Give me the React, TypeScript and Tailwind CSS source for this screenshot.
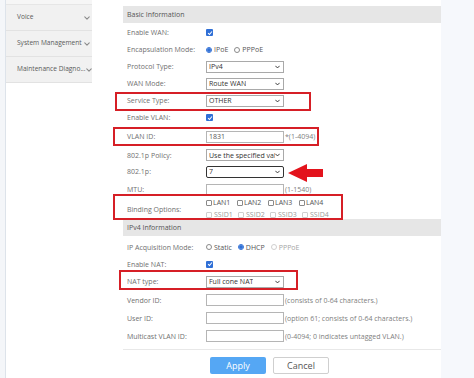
import React from "react";

const Chevron = ({ className = "" }: { className?: string }) => (
  <svg viewBox="0 0 8 5" className={className} fill="none">
    <path d="M1 1 L4 4 L7 1" stroke="currentColor" strokeWidth="1.4" strokeLinecap="round" strokeLinejoin="round" />
  </svg>
);

const Check = () => (
  <span className="inline-flex w-[7px] h-[7px] bg-[#2f6fd6] rounded-[1px] items-center justify-center">
    <svg viewBox="0 0 8 8" className="w-[6px] h-[6px]" fill="none">
      <path d="M1.5 4.2 L3.3 6 L6.6 2" stroke="white" strokeWidth="1.4" />
    </svg>
  </span>
);

const Box = ({ disabled = false }: { disabled?: boolean }) => (
  <span
    className={`inline-block w-[6px] h-[6px] border ${disabled ? "border-[#cfcfcf]" : "border-[#8a8a8a]"} bg-white rounded-[1px]`}
  />
);

const Radio = ({ on = false, disabled = false }: { on?: boolean; disabled?: boolean }) => (
  <span
    className={`inline-flex w-[6px] h-[6px] rounded-full border items-center justify-center ${
      on ? "border-[#2f6fd6]" : disabled ? "border-[#d0d0d0]" : "border-[#8a8a8a]"
    }`}
  >
    {on && <span className="w-[4px] h-[4px] rounded-full bg-[#2f6fd6]" />}
  </span>
);

const Select = ({ value, dark = false }: { value: string; dark?: boolean }) => (
  <div
    className={`w-[78px] h-[12px] flex items-center justify-between pl-[2px] pr-[3px] bg-white border ${
      dark ? "border-[#333] rounded-[2px]" : "border-[#a9a9a9]"
    } text-[#333] overflow-hidden whitespace-nowrap`}
  >
    <span className="overflow-hidden">{value}</span>
    <Chevron className="w-[5px] h-[4px] text-[#222] shrink-0" />
  </div>
);

const Input = ({ value = "" }: { value?: string }) => (
  <div className="w-[78px] h-[12px] flex items-center pl-[2px] bg-white border border-[#b5b5b5] text-[#555]">
    {value}
  </div>
);

const Row = ({ label, h, children }: { label: string; h: string; children?: React.ReactNode }) => (
  <div className={`flex items-center ${h}`}>
    <div className="w-[83px] pl-[4px] text-[#707070] whitespace-nowrap">{label}</div>
    <div className="flex items-center">{children}</div>
  </div>
);

const Hint = ({ children }: { children: React.ReactNode }) => (
  <span className="ml-[1px] text-[#808080] whitespace-nowrap">{children}</span>
);

const SideItem = ({ label }: { label: string }) => (
  <div className="h-[26px] flex items-center justify-between pl-[11px] pr-[2px] border-b border-[#e2e2e2] text-[#5a5a5a] text-[6.6px]">
    <span className="whitespace-nowrap">{label}</span>
    <Chevron className="w-[6px] h-[4px] text-[#8a8a8a] shrink-0" />
  </div>
);

export default function App() {
  return (
    <div
      className="relative w-[474px] h-[378px] overflow-hidden bg-white flex text-[7px] leading-none"
      style={{ fontFamily: '"Open Sans", "Noto Sans", sans-serif' }}
    >
      {/* left strip */}
      <div className="w-[6px] bg-[#f4f6f9] border-r border-[#dde3ea]" />
      {/* sidebar */}
      <div className="w-[86px]">
        <div className="bg-[#f1f1f1]">
          <div className="h-[5px] border-b border-[#e6e6e6] bg-[#f6f6f6]" />
          <SideItem label="Voice" />
          <SideItem label="System Management" />
          <SideItem label="Maintenance Diagno..." />
        </div>
      </div>
      {/* main */}
      <div className="w-[349px] pl-[31px] bg-white">
        <div className="w-[318px] pt-[6px]">
          <div className="h-[17px] bg-[#e6e6e6] flex items-center pl-[4px] text-[#555]">Basic Information</div>
          <div className="h-[1px]" />
          <Row label="Enable WAN:" h="h-[17px]">
            <Check />
          </Row>
          <Row label="Encapsulation Mode:" h="h-[17px]">
            <span className="flex items-center gap-[2px] text-[#555]">
              <Radio on />
              <span>IPoE</span>
              <span className="w-[2px]" />
              <Radio />
              <span>PPPoE</span>
            </span>
          </Row>
          <Row label="Protocol Type:" h="h-[17px]">
            <Select value="IPv4" />
          </Row>
          <Row label="WAN Mode:" h="h-[17px]">
            <Select value="Route WAN" />
          </Row>
          <Row label="Service Type:" h="h-[17px]">
            <Select value="OTHER" />
          </Row>
          <Row label="Enable VLAN:" h="h-[17px]">
            <Check />
          </Row>
          <Row label="VLAN ID:" h="h-[21px]">
            <Input value="1831" />
            <Hint>*(1-4094)</Hint>
          </Row>
          <Row label="802.1p Policy:" h="h-[16px]">
            <Select value="Use the specified val" />
          </Row>
          <Row label="802.1p:" h="h-[17px]">
            <Select value="7" dark />
          </Row>
          <Row label="MTU:" h="h-[19px]">
            <Input />
            <Hint>(1-1540)</Hint>
          </Row>
          <div className="flex items-center h-[20px]">
            <div className="w-[83px] pl-[4px] text-[#707070]">Binding Options:</div>
            <div className="flex flex-col leading-[12px]">
              <div className="flex items-center text-[#555] h-[12px]">
                {["LAN1", "LAN2", "LAN3", "LAN4"].map((l) => (
                  <span key={l} className="flex items-center gap-[1px] w-[31px]">
                    <Box />
                    <span>{l}</span>
                  </span>
                ))}
              </div>
              <div className="flex items-center text-[#9a9a9a] h-[12px]">
                {["SSID1", "SSID2", "SSID3", "SSID4"].map((l) => (
                  <span key={l} className="flex items-center gap-[2px] w-[32px]">
                    <Box disabled />
                    <span>{l}</span>
                  </span>
                ))}
              </div>
            </div>
          </div>
          <div className="h-[17px] bg-[#e6e6e6] flex items-center pl-[4px] text-[#555]">IPv4 Information</div>
          <div className="h-[2px]" />
          <Row label="IP Acquisition Mode:" h="h-[18px]">
            <span className="flex items-center gap-[2px] text-[#555]">
              <Radio />
              <span>Static</span>
              <span className="w-[2px]" />
              <Radio on />
              <span>DHCP</span>
              <span className="w-[2px]" />
              <Radio disabled />
              <span className="text-[#a5a5a5]">PPPoE</span>
            </span>
          </Row>
          <Row label="Enable NAT:" h="h-[16px]">
            <Check />
          </Row>
          <Row label="NAT type:" h="h-[19px]">
            <Select value="Full cone NAT" />
          </Row>
          <Row label="Vendor ID:" h="h-[18px]">
            <Input />
            <Hint>(consists of 0-64 characters.)</Hint>
          </Row>
          <Row label="User ID:" h="h-[18px]">
            <Input />
            <Hint>(option 61; consists of 0-64 characters.)</Hint>
          </Row>
          <Row label="Multicast VLAN ID:" h="h-[18px]">
            <Input />
            <Hint>(0-4094; 0 indicates untagged VLAN.)</Hint>
          </Row>
          <div className="h-[4px]" />
          <div className="border-t border-[#e8e8e8]" />
          <div className="flex pl-[87px] gap-[7px] pt-[7px]">
            <button className="w-[56px] h-[17px] rounded-[2px] bg-[#55a7f4] text-white text-[9px] flex items-center justify-center">
              Apply
            </button>
            <button className="w-[56px] h-[17px] rounded-[2px] bg-white border border-[#cfcfcf] text-[#555] text-[9px] flex items-center justify-center">
              Cancel
            </button>
          </div>
        </div>
      </div>
      {/* right column */}
      <div className="flex-1 bg-[#f6f8fc]" />

      {/* annotation overlays */}
      <div className="absolute left-[115px] top-[92px] w-[196px] h-[19px] border-2 border-[#d61f26]" />
      <div className="absolute left-[113px] top-[127px] w-[206px] h-[19px] border-2 border-[#d61f26]" />
      <div className="absolute left-[113px] top-[194px] w-[230px] h-[26px] border-2 border-[#d61f26]" />
      <div className="absolute left-[119px] top-[270px] w-[179px] h-[20px] border-2 border-[#d61f26]" />
      <svg className="absolute left-[288px] top-[164px] w-[35px] h-[18px]" viewBox="0 0 35 18">
        <polygon points="0,9 19,0 19,5 35,5 35,13 19,13 19,18" fill="#e3131c" />
      </svg>
    </div>
  );
}
